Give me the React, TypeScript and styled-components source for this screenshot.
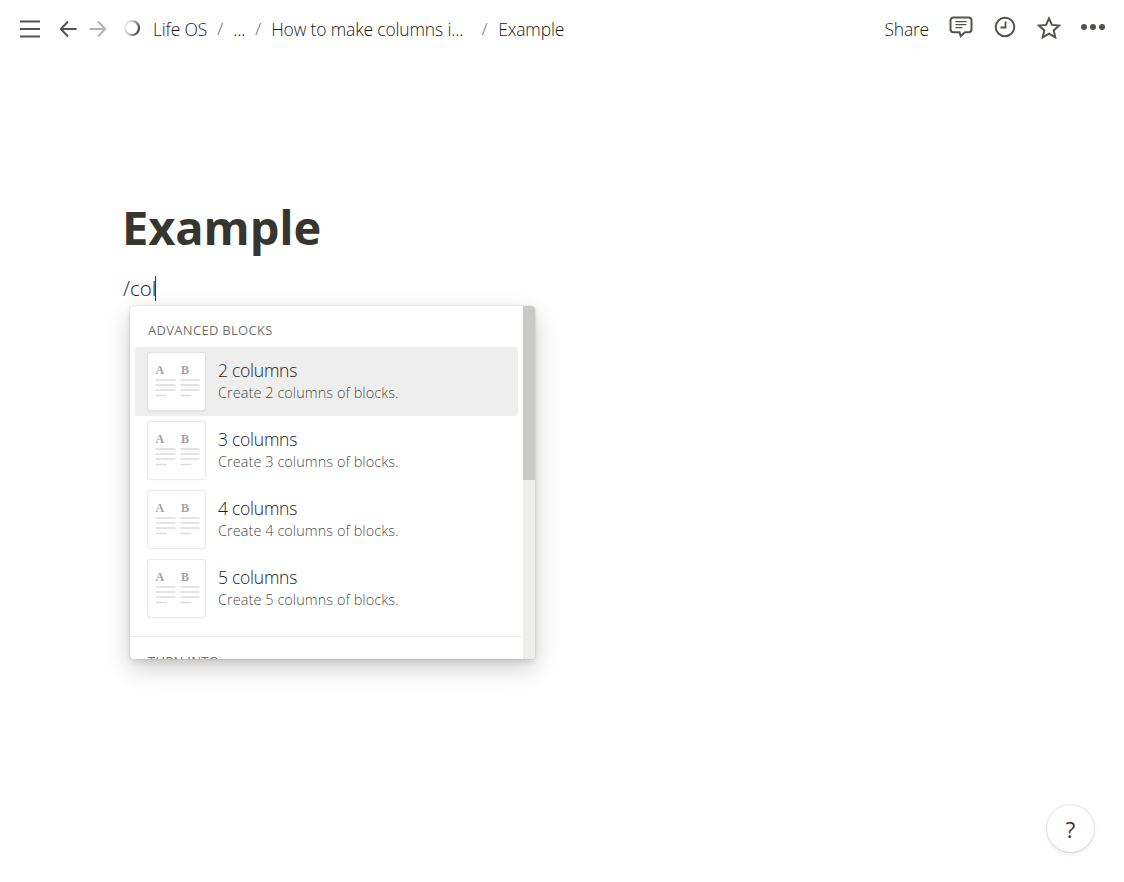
import React from "react";
import styled, { createGlobalStyle } from "styled-components";

const Global = createGlobalStyle`
  html, body { margin: 0; padding: 0; background: #fff; height: 100%; overflow: hidden; }
  #root { height: 100%; }
  * { box-sizing: border-box; }
  body { font-family: "Open Sans", "Noto Sans", "Liberation Sans", sans-serif; color: #37352f; }
`;

const Page = styled.div`
  position: relative;
  width: 1124px;
  height: 882px;
  overflow: hidden;
  background: #fff;
`;

const TopBar = styled.header`
  display: flex;
  align-items: center;
  height: 57px;
  padding: 0 19px 0 19px;
`;

const IconSlot = styled.span<{ $w: number; $mr?: number; $lift?: number }>`
  display: flex;
  align-items: center;
  justify-content: center;
  flex: none;
  width: ${(p) => p.$w}px;
  margin-right: ${(p) => p.$mr ?? 0}px;
  margin-bottom: ${(p) => p.$lift ?? 0}px;
`;

const Crumb = styled.span<{ $w?: number }>`
  font-size: 17.5px;
  font-weight: 300;
  letter-spacing: -0.16px;
  color: #1c1a16;
  white-space: nowrap;
  flex: none;
  width: ${(p) => (p.$w ? `${p.$w}px` : "auto")};
`;

const Sep = styled.span<{ $w: number }>`
  font-size: 17px;
  font-weight: 300;
  color: #5f5e59;
  flex: none;
  width: ${(p) => p.$w}px;
  text-align: center;
`;

const Spacer = styled.div`
  flex: 1;
`;

const Share = styled.span`
  font-size: 17.5px;
  font-weight: 300;
  letter-spacing: -0.2px;
  color: #1c1a16;
  margin-right: 20px;
`;

const Content = styled.main`
  padding: 139px 0 0 122px;
`;

const Title = styled.h1`
  margin: 0;
  font-size: 47px;
  line-height: 62px;
  font-weight: 700;
  letter-spacing: -0.1px;
  color: #37352f;
`;

const Slash = styled.div`
  display: flex;
  align-items: center;
  height: 30px;
  margin: 15px 0 0 1px;
  font-size: 20.5px;
  font-weight: 300;
  line-height: 30px;
  color: #1c1a16;
`;

const Caret = styled.span`
  display: inline-block;
  width: 1px;
  height: 25px;
  margin-left: -1px;
  background: #37352f;
`;

const Menu = styled.div`
  position: absolute;
  left: 130px;
  top: 306px;
  width: 405px;
  height: 353px;
  display: flex;
  overflow: hidden;
  background: #fff;
  border-radius: 4px;
  box-shadow: 0 0 0 1px rgba(15, 15, 15, 0.05), 0 3px 6px rgba(15, 15, 15, 0.1), 0 9px 24px rgba(15, 15, 15, 0.2);
`;

const List = styled.div`
  width: 393px;
  flex: none;
  overflow: hidden;
`;

const Track = styled.div`
  flex: 1;
  background: #ededea;
`;

const Thumb = styled.div`
  height: 174px;
  background: #c9c9c5;
`;

const SectionLabel = styled.div`
  padding: 15px 18px 0;
  height: 41px;
  font-size: 13px;
  line-height: 18px;
  letter-spacing: 0.3px;
  color: rgba(55, 53, 47, 0.72);
  text-transform: uppercase;
`;

const Row = styled.div<{ $active?: boolean }>`
  display: flex;
  align-items: center;
  height: 69px;
  margin: 0 5px;
  padding-left: 12px;
  border-radius: 3px;
  background: ${(p) => (p.$active ? "#eeeeee" : "transparent")};
`;

const Thumbnail = styled.div<{ $active?: boolean }>`
  flex: none;
  width: 59px;
  height: 59px;
  display: flex;
  align-items: center;
  justify-content: center;
  background: #fff;
  border-radius: 4px;
  box-shadow: inset 0 0 0 1px rgba(15, 15, 15, ${(p) => (p.$active ? 0.12 : 0.08)}), 0 ${(p) => (p.$active ? 1 : 0)}px 2px rgba(15, 15, 15, 0.06);
`;

const RowText = styled.div`
  margin-left: 12px;
  margin-top: -2px;
  display: flex;
  flex-direction: column;
`;

const RowTitle = styled.div`
  font-size: 17.5px;
  font-weight: 300;
  line-height: 25px;
  letter-spacing: -0.25px;
  color: #1c1a16;
`;

const RowDesc = styled.div`
  font-size: 14.5px;
  font-weight: 300;
  line-height: 20px;
  letter-spacing: 0.05px;
  color: rgba(55, 53, 47, 0.92);
`;

const Divider = styled.div`
  height: 1px;
  margin-top: 13px;
  background: #ededec;
`;

const HelpButton = styled.div`
  position: absolute;
  left: 1047px;
  top: 805px;
  width: 47px;
  height: 47px;
  border-radius: 50%;
  display: flex;
  align-items: center;
  justify-content: center;
  background: #fff;
  font-size: 22px;
  font-weight: 400;
  color: #37352f;
  box-shadow: 0 0 0 1px rgba(15, 15, 15, 0.08), 0 2px 4px rgba(15, 15, 15, 0.1);
`;

const ThumbArt = () => (
  <svg width="46" height="46" viewBox="0 0 46 46" fill="none">
    <text x="1.5" y="15" fontFamily="Liberation Serif, serif" fontWeight="700" fontSize="12" fill="#a3a29f">A</text>
    <text x="27" y="15" fontFamily="Liberation Serif, serif" fontWeight="700" fontSize="12" fill="#a3a29f">B</text>
    <g stroke="#dcdcda" strokeWidth="1.3">
      <path d="M1.5 21h20M1.5 26h20M1.5 31h20M1.5 36.5h11" />
      <path d="M26.5 21h19M26.5 26h19M26.5 31h19M26.5 36.5h11" />
    </g>
  </svg>
);

const Hamburger = () => (
  <svg width="22" height="18" viewBox="0 0 22 18">
    <path d="M1 1.5h20M1 9h20M1 16.5h20" stroke="#55534e" strokeWidth="2.2" fill="none" />
  </svg>
);

const Arrow = ({ color, flip }: { color: string; flip?: boolean }) => (
  <svg width="18" height="18" viewBox="0 0 18 18" style={flip ? { transform: "scaleX(-1)" } : undefined}>
    <path d="M9 1.5L1.8 9l7.2 7.5M2 9h15.5" stroke={color} strokeWidth="2" fill="none" />
  </svg>
);

const Spinner = () => (
  <svg width="18" height="18" viewBox="0 0 18 18">
    <defs>
      <linearGradient id="spin" x1="0" y1="0.2" x2="1" y2="0.5">
        <stop offset="0" stopColor="#f0f0ef" />
        <stop offset="0.45" stopColor="#c6c5c3" />
        <stop offset="1" stopColor="#4a4843" />
      </linearGradient>
    </defs>
    <circle cx="9" cy="9" r="7" stroke="url(#spin)" strokeWidth="2.1" fill="none" />
  </svg>
);

const Comment = () => (
  <svg width="24" height="22" viewBox="0 0 24 22" fill="none">
    <path d="M4.5 1.4h15a3 3 0 0 1 3 3v8.8a3 3 0 0 1-3 3h-3.6l-4.2 4-1.2-4H4.5a3 3 0 0 1-3-3V4.4a3 3 0 0 1 3-3z" stroke="#55534e" strokeWidth="2" />
    <path d="M6.5 5.6h11M6.5 8.6h11M6.5 11.6h7" stroke="#55534e" strokeWidth="1.4" />
  </svg>
);

const Clock = () => (
  <svg width="22" height="22" viewBox="0 0 22 22" fill="none">
    <circle cx="11" cy="11" r="9.3" stroke="#55534e" strokeWidth="2" />
    <path d="M11.5 5.5v6H6.5" stroke="#55534e" strokeWidth="1.8" />
  </svg>
);

const Star = () => (
  <svg width="24" height="23" viewBox="0 0 24 23" fill="none">
    <path d="M12 2.4l2.9 6.5 7.2.7-5.4 4.8 1.6 7-6.3-3.7-6.3 3.7 1.6-7L1.9 9.6l7.2-.7z" stroke="#55534e" strokeWidth="2" strokeLinejoin="miter" />
  </svg>
);

const More = () => (
  <svg width="24" height="6" viewBox="0 0 24 6">
    <circle cx="3" cy="3" r="3" fill="#55534e" />
    <circle cx="12" cy="3" r="3" fill="#55534e" />
    <circle cx="21" cy="3" r="3" fill="#55534e" />
  </svg>
);

const counts = [2, 3, 4, 5];

export default function App() {
  return (
    <Page>
      <Global />
      <TopBar>
        <IconSlot $w={22} $mr={18}><Hamburger /></IconSlot>
        <IconSlot $w={18} $mr={12}><Arrow color="#55534e" /></IconSlot>
        <IconSlot $w={18} $mr={16}><Arrow color="#b4b3b0" flip /></IconSlot>
        <IconSlot $w={18} $mr={12} $lift={1}><Spinner /></IconSlot>
        <Crumb>Life OS</Crumb>
        <Sep $w={26}>/</Sep>
        <Crumb>...</Crumb>
        <Sep $w={26}>/</Sep>
        <Crumb $w={200}>How to make columns i...</Crumb>
        <Sep $w={27}>/</Sep>
        <Crumb>Example</Crumb>
        <Spacer />
        <Share>Share</Share>
        <IconSlot $w={24} $mr={21} $lift={3}><Comment /></IconSlot>
        <IconSlot $w={22} $mr={21} $lift={3}><Clock /></IconSlot>
        <IconSlot $w={24} $mr={20} $lift={3}><Star /></IconSlot>
        <IconSlot $w={24} $lift={3}><More /></IconSlot>
      </TopBar>
      <Content>
        <Title>Example</Title>
        <Slash>/col<Caret /></Slash>
      </Content>
      <Menu>
        <List>
          <SectionLabel>Advanced blocks</SectionLabel>
          {counts.map((n, i) => (
            <Row key={n} $active={i === 0}>
              <Thumbnail $active={i === 0}><ThumbArt /></Thumbnail>
              <RowText>
                <RowTitle>{n} columns</RowTitle>
                <RowDesc>Create {n} columns of blocks.</RowDesc>
              </RowText>
            </Row>
          ))}
          <Divider />
          <SectionLabel>Turn into</SectionLabel>
        </List>
        <Track><Thumb /></Track>
      </Menu>
      <HelpButton>?</HelpButton>
    </Page>
  );
}
